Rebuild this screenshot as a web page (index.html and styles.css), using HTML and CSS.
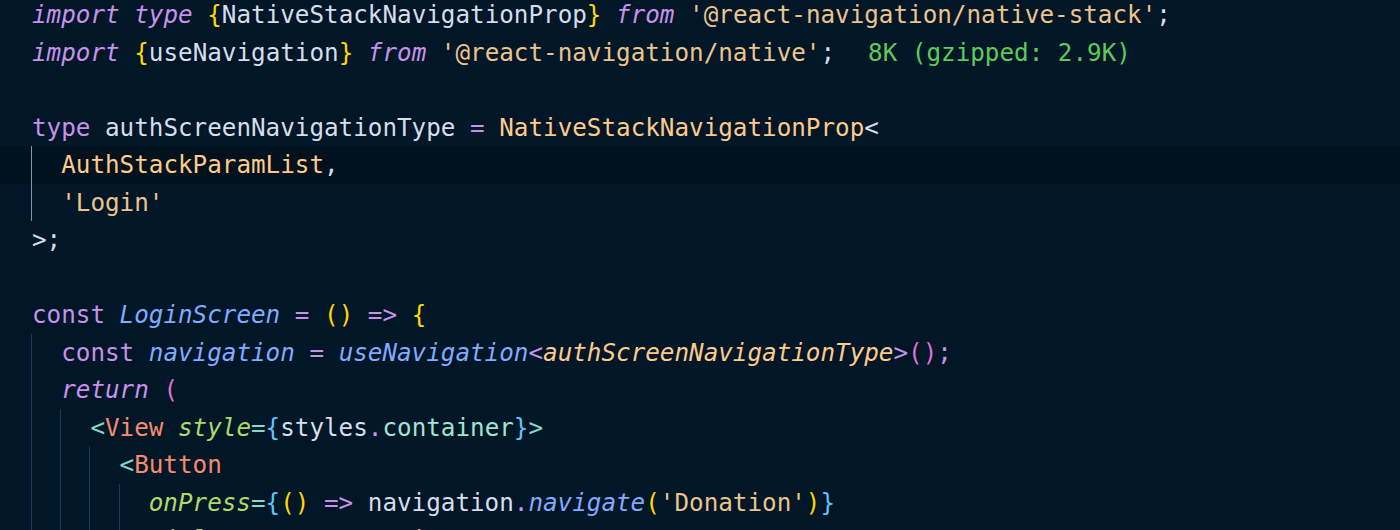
FILE: index.html
```html
<!DOCTYPE html>
<html lang="en">
<head>
<meta charset="utf-8">
<title>LoginScreen.tsx</title>
<link rel="stylesheet" href="styles.css">
</head>
<body>
<div class="editor">
  <div class="line"><span class="code"><span class="kw it">import</span> <span class="kw it">type</span> <span class="b1">{</span><span class="tx">NativeStackNavigationProp</span><span class="b1">}</span> <span class="kw it">from</span> <span class="str">'@react-navigation/native-stack'</span><span class="tx">;</span></span></div>
  <div class="line"><span class="code"><span class="kw it">import</span> <span class="b1">{</span><span class="tx">useNavigation</span><span class="b1">}</span> <span class="kw it">from</span> <span class="str">'@react-navigation/native'</span><span class="tx">;</span></span><span class="cost">8K (gzipped: 2.9K)</span></div>
  <div class="line"></div>
  <div class="line"><span class="code"><span class="kw">type</span> <span class="tx">authScreenNavigationType</span> <span class="kw">=</span> <span class="ty">NativeStackNavigationProp</span><span class="tx">&lt;</span></span></div>
  <div class="line current"><span class="ind active"></span><span class="code"><span class="ty">AuthStackParamList</span><span class="tx">,</span></span></div>
  <div class="line"><span class="ind active"></span><span class="code"><span class="str">'Login'</span></span></div>
  <div class="line"><span class="code"><span class="tx">&gt;;</span></span></div>
  <div class="line"></div>
  <div class="line"><span class="code"><span class="kw">const</span> <span class="fn it">LoginScreen</span> <span class="kw">=</span> <span class="b1">()</span> <span class="kw">=&gt;</span> <span class="b1">{</span></span></div>
  <div class="line"><span class="ind"></span><span class="code"><span class="kw">const</span> <span class="fn it">navigation</span> <span class="kw">=</span> <span class="fn it">useNavigation</span><span class="kw">&lt;</span><span class="ty it">authScreenNavigationType</span><span class="kw">&gt;</span><span class="b2">()</span><span class="kw">;</span></span></div>
  <div class="line"><span class="ind"></span><span class="code"><span class="kw it">return</span> <span class="b2">(</span></span></div>
  <div class="line"><span class="ind"></span><span class="ind"></span><span class="code"><span class="tg">&lt;</span><span class="tag">View</span> <span class="attr it">style</span><span class="tg">=</span><span class="b3">{</span><span class="tx">styles</span><span class="kw">.</span><span class="prop">container</span><span class="b3">}</span><span class="tg">&gt;</span></span></div>
  <div class="line"><span class="ind"></span><span class="ind"></span><span class="ind"></span><span class="code"><span class="tg">&lt;</span><span class="tag">Button</span></span></div>
  <div class="line"><span class="ind"></span><span class="ind"></span><span class="ind"></span><span class="ind"></span><span class="code"><span class="attr it">onPress</span><span class="tg">=</span><span class="b3">{</span><span class="b1">()</span> <span class="kw">=&gt;</span> <span class="tx">navigation</span><span class="kw">.</span><span class="fn it">navigate</span><span class="b1">(</span><span class="str">'Donation'</span><span class="b1">)</span><span class="b3">}</span></span></div>
  <div class="line"><span class="ind"></span><span class="ind"></span><span class="ind"></span><span class="ind"></span><span class="code"><span class="attr it">title</span><span class="tg">=</span><span class="str">"Go to Donation"</span></span></div>
</div>
</body>
</html>
```

FILE: styles.css
```css
html, body {
  margin: 0;
  padding: 0;
  background: #011627;
  overflow: hidden;
}

.editor {
  margin-top: -3.75px;
  padding-left: 32px;
  font-family: "DejaVu Sans Mono", "Liberation Mono", monospace;
  font-size: 24.25px;
  color: #d6deeb;
}

.line {
  display: flex;
  align-items: stretch;
  height: 37.5px;
  line-height: 37.5px;
  white-space: pre;
}

.line.current {
  background: #01111d;
  margin-left: -32px;
  padding-left: 32px;
}

.ind {
  flex: none;
  width: 2ch;
  margin-left: -1px;
  border-left: 1px solid #1f385c;
}

.ind.active {
  border-left-color: #7e97ac;
}

.code {
  white-space: pre;
}

.it { font-style: italic; }
.kw { color: #c792ea; }
.tx { color: #d6deeb; }
.str { color: #ecc48d; }
.ty { color: #ffcb8b; }
.fn { color: #82aaff; }
.b1 { color: #ffd700; }
.b2 { color: #da70d6; }
.b3 { color: #5fc4f8; }
.tg { color: #7fdbca; }
.tag { color: #f78c6c; }
.attr { color: #addb67; }
.prop { color: #9fe5d6; }

.cost {
  margin-left: 33px;
  color: #5ccb5c;
  white-space: pre;
}
```
